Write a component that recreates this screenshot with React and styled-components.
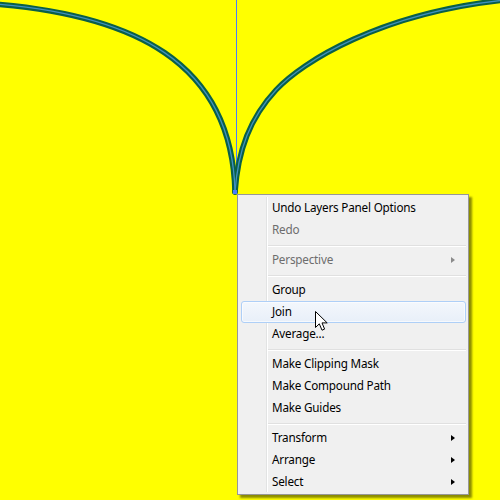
import React from "react";
import styled, { createGlobalStyle } from "styled-components";

const Global = createGlobalStyle`
  html, body {
    margin: 0;
    padding: 0;
  }
  body {
    font-family: "Noto Sans", "DejaVu Sans", sans-serif;
  }
`;

const Canvas = styled.div`
  position: relative;
  width: 500px;
  height: 500px;
  overflow: hidden;
  background: #ffff00;
`;

const Artwork = styled.svg`
  display: block;
  width: 500px;
  height: 500px;
`;

const Menu = styled.div`
  position: absolute;
  left: 237px;
  top: 194px;
  width: 230px;
  padding: 2px 0 1px;
  background: #f0f0f0;
  border: 1px solid #979797;
  box-shadow: 3px 3px 2px rgba(0, 0, 0, 0.45);
  &::before {
    content: "";
    position: absolute;
    top: 2px;
    bottom: 2px;
    left: 28px;
    width: 1px;
    background: #e2e3e3;
    box-shadow: 1px 0 0 #fff;
  }
`;

const Row = styled.div`
  position: relative;
  display: flex;
  align-items: center;
  height: 22px;
  margin: 0 2px 0 3px;
  padding: 0 10px 0 30px;
  box-sizing: border-box;
  font-size: 11.7px;
  letter-spacing: -0.2px;
  color: ${(p) => (p.$disabled ? "#6d6d6d" : "#000")};
  border: 1px solid ${(p) => (p.$hover ? "#aecff7" : "transparent")};
  border-radius: 3px;
  background: ${(p) =>
    p.$hover ? "linear-gradient(#f3f7fc, #e8eff9)" : "transparent"};
  box-shadow: ${(p) => (p.$hover ? "inset 0 0 0 1px rgba(255,255,255,0.6)" : "none")};
`;

const Label = styled.span`
  flex: 1;
  white-space: nowrap;
  padding-bottom: 2px;
`;

const Arrow = styled.span`
  width: 0;
  height: 0;
  border-top: 3.5px solid transparent;
  border-bottom: 3.5px solid transparent;
  border-left: 4px solid ${(p) => (p.$disabled ? "#8a8a8a" : "#000")};
`;

const Separator = styled.div`
  height: 8px;
  display: flex;
  align-items: center;
  margin: 0 2px 0 30px;
  &::after {
    content: "";
    flex: 1;
    height: 1px;
    background: #e0e0e0;
    box-shadow: 0 1px 0 #fff;
  }
`;

const Pointer = styled.svg`
  position: absolute;
  left: 315px;
  top: 311px;
  width: 14px;
  height: 21px;
`;

const items = [
  { label: "Undo Layers Panel Options" },
  { label: "Redo", disabled: true },
  "sep",
  { label: "Perspective", disabled: true, sub: true },
  "sep",
  { label: "Group" },
  { label: "Join", hover: true },
  { label: "Average..." },
  "sep",
  { label: "Make Clipping Mask" },
  { label: "Make Compound Path" },
  { label: "Make Guides" },
  "sep",
  { label: "Transform", sub: true },
  { label: "Arrange", sub: true },
  { label: "Select", sub: true },
];

const LEFT = "M-5 4 C130 15, 232 60, 235 192";
const RIGHT = "M235 192 C238 150, 250 118, 276 90 S380 13, 505 0";

const Curves = () => (
  <Artwork viewBox="0 0 500 500">
    <line x1="236.5" y1="0" x2="236.5" y2="192" stroke="#4a7cff" strokeWidth="1" />
    <g fill="none" strokeLinecap="round">
      <path d={LEFT} stroke="#0a5f48" strokeWidth="5.5" />
      <path d={RIGHT} stroke="#0a5f48" strokeWidth="5.5" />
      <path d={LEFT} stroke="#3f8fc0" strokeWidth="1.3" />
      <path d={RIGHT} stroke="#3f8fc0" strokeWidth="1.3" />
    </g>
    <rect x="233" y="190" width="4" height="4" fill="#4a7cff" />
  </Artwork>
);

export default function App() {
  return (
    <>
      <Global />
      <Canvas>
        <Curves />
        <Menu>
          {items.map((it, i) =>
            it === "sep" ? (
              <Separator key={i} />
            ) : (
              <Row key={i} $disabled={it.disabled} $hover={it.hover}>
                <Label>{it.label}</Label>
                {it.sub && <Arrow $disabled={it.disabled} />}
              </Row>
            )
          )}
        </Menu>
        <Pointer viewBox="0 0 14 21">
          <path
            d="M0.5 0.5 L0.5 16.5 L4.3 12.8 L7 19.2 L9.6 18.1 L7 11.9 L12.2 11.9 Z"
            fill="#fff"
            stroke="#000"
            strokeWidth="1"
            strokeLinejoin="round"
          />
        </Pointer>
      </Canvas>
    </>
  );
}
